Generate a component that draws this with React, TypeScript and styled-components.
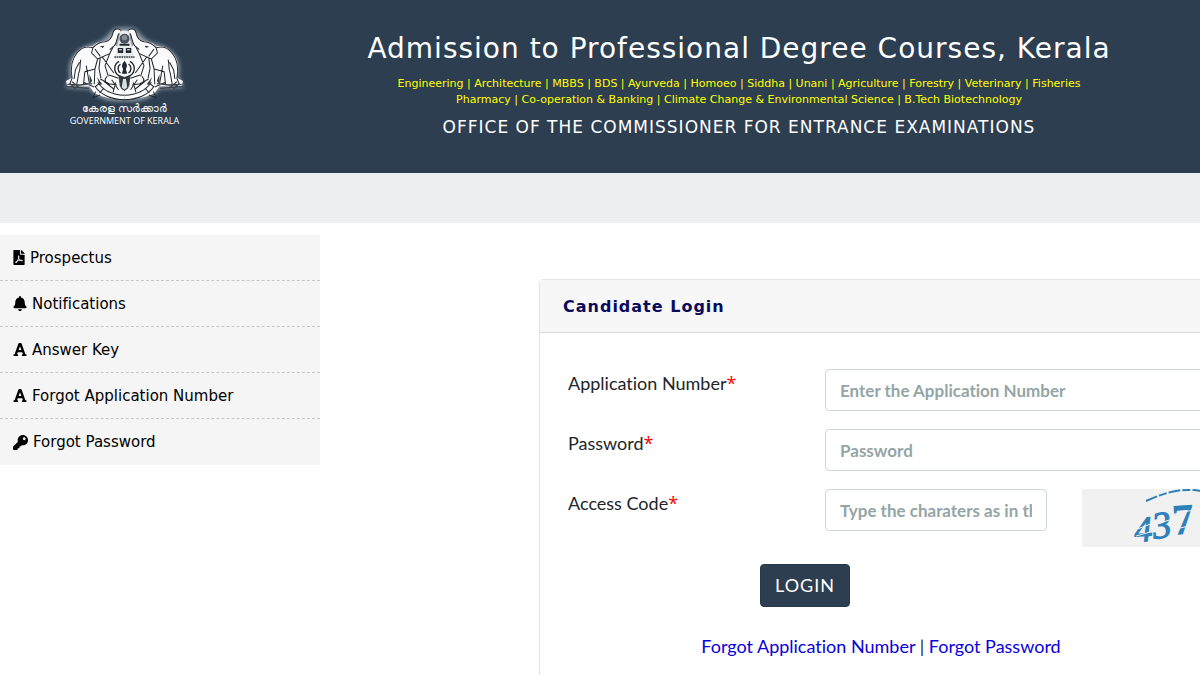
import React from "react";
import styled, { createGlobalStyle } from "styled-components";
import { FaBell, FaFilePdf, FaFont, FaKey } from "react-icons/fa";

const verdana = `Verdana, "DejaVu Sans", sans-serif`;
const lato = `Lato, "Liberation Sans", sans-serif`;

const GlobalStyle = createGlobalStyle`
  *, *::before, *::after { box-sizing: border-box; }
  body {
    margin: 0;
    background: #fff;
    color: #212529;
    font-family: ${lato};
    font-size: 18px;
    font-variant-ligatures: none;
  }
`;

const Page = styled.div`
  min-height: 100vh;
  overflow: clip;
`;

const Header = styled.header`
  display: flex;
  align-items: flex-start;
  padding: 27px 0 34px 64px;
  background: #2c3e50;
  color: #fff;
`;

const Logo = styled.div`
  flex: none;
  width: 121px;
  text-align: center;
  font-family: "Open Sans", "Noto Sans", sans-serif;
`;

const LogoCaption = styled.div<{ $size: number }>`
  font-size: ${(p) => p.$size}px;
  font-weight: 500;
  line-height: 13px;
  white-space: nowrap;
`;

const Heading = styled.div`
  flex: 1;
  padding-left: 93px;
  text-align: center;
  font-family: ${verdana};
`;

const Title = styled.h1`
  margin: 0;
  font-size: 28px;
  line-height: 44px;
  font-weight: 400;
  letter-spacing: 1px;
`;

const Courses = styled.p`
  margin: 5px 0 0;
  color: #ff0;
  font-size: 11px;
  line-height: 16px;
`;

const Office = styled.p`
  margin: 7px 0 0;
  font-size: 17px;
  line-height: 24px;
  letter-spacing: 1px;
`;

const Strip = styled.div`
  height: 50px;
  background: #ebeff0;
`;

const Main = styled.main`
  display: flex;
  align-items: flex-start;
  padding-top: 12px;
`;

const Sidebar = styled.nav`
  flex: none;
  width: 320px;
  background: #f5f5f5;
`;

const SidebarLink = styled.a`
  display: flex;
  align-items: center;
  gap: 5px;
  height: 46px;
  padding-left: 13px;
  border-bottom: 1px dashed #c8c8c8;
  color: #000;
  font-family: ${verdana};
  font-size: 15px;
  text-decoration: none;

  &:last-child { border-bottom: 0; }
`;

const Card = styled.section`
  flex: 1;
  margin: 44px -23px 0 219px;
  min-height: 400px;
  border: 1px solid #e3e5e6;
  border-radius: 4px;
`;

const CardTitle = styled.h2`
  margin: 0;
  padding: 15px 23px 13px;
  border-bottom: 1px solid #d5d9db;
  background: #f7f7f7;
  color: #0a0a5c;
  font-family: ${verdana};
  font-size: 16px;
  line-height: 24px;
  letter-spacing: 1px;
`;

const Form = styled.form`
  display: flex;
  flex-direction: column;
  gap: 18px;
  padding: 36px 8px 0 28px;
`;

const Field = styled.div`
  display: grid;
  grid-template-columns: 257px 1fr;
  align-items: start;
`;

const Label = styled.label`
  padding-top: 2px;
  line-height: 24px;
`;

const Star = styled.span`
  color: #f00;
  font-family: "Open Sans", sans-serif;
`;

const Input = styled.input`
  width: 100%;
  height: 42px;
  padding: 0 14px;
  border: 1px solid #ced4da;
  border-radius: 4px;
  background: #fff;
  font-family: ${lato};
  font-size: 17px;
  font-weight: 700;
  font-variant-ligatures: none;

  &::placeholder { color: #95a5a6; opacity: 1; }
`;

const AccessRow = styled.div`
  display: grid;
  grid-template-columns: 222px 1fr;
  gap: 35px;
  height: 57px;
`;

const Captcha = styled.div`
  height: 58px;
  background: #f1f1f1;

  svg { display: block; overflow: visible; }
`;

const Actions = styled.div`
  padding-left: 192px;
`;

const LoginButton = styled.button`
  width: 90px;
  height: 43px;
  padding: 0 0 2px;
  border: 1px solid #24384b;
  border-radius: 4px;
  background: #2c3e50;
  color: #fff;
  font-family: ${lato};
  font-size: 18px;
  letter-spacing: 1px;
`;

const Links = styled.p`
  margin: 27px 0 0;
  line-height: 24px;
  text-align: center;
`;

const TextLink = styled.a`
  color: #0a00dc;
  text-decoration: none;
`;

function EmblemHalf() {
  return (
    <g>
      <path
        d="M222 250C190 252 158 246 132 232L118 212L52 212L48 196L66 186C58 152 64 122 86 104C98 92 114 90 128 92C136 80 152 78 164 76C180 74 186 60 188 50C190 40 204 36 211 44L208 54C200 56 202 74 194 88L206 98L222 104Z"
        fill="#fbfbfb"
      />
      <g fill="none" stroke="#20262c" strokeWidth="3" strokeLinejoin="round">
        <path d="M211 44C203 36 190 40 188 50C185 66 178 76 164 78C148 79 138 84 128 96M207 53C200 56 202 76 192 90L178 102" />
        <path d="M128 96C108 90 92 98 82 110C66 128 60 154 66 188L58 208M92 132C88 150 92 160 86 172L80 206M88 140L76 162L72 190" />
        <path d="M128 96L124 112L142 130L178 114L188 94M134 100L150 122M142 130L134 160L132 206M150 126L146 158L152 188M156 124L190 172M178 114L164 150L174 182M134 160L104 168L100 206M108 150L118 206" />
        <path d="M52 206L90 208L126 204M48 212L116 218M66 198L90 218M100 200L132 214M60 204L76 220" strokeWidth="4" stroke="#3b4249" />
        <path d="M142 200C158 224 188 238 222 239M134 212C152 240 188 252 222 252M146 204L134 214M160 218L148 232M136 228L128 246L150 238M170 182C160 192 164 202 178 206M176 178L204 188M150 190L176 204L200 208M184 192L204 222M196 200L188 230M160 196L190 220" />
        <path d="M206 137C190 145 188 168 204 179L222 188M210 145C200 152 201 166 210 172" strokeWidth="4" />
      </g>
      <path d="M148 92L162 90L158 97Z M140 184L156 206L148 208Z M204 178L222 184L222 220L208 212Z M118 176L126 196L118 204Z" fill="#343b42" />
    </g>
  );
}

function Emblem() {
  return (
    <svg width="121" height="74" viewBox="42 34 360 222" preserveAspectRatio="none" role="img" aria-label="Emblem of Kerala" style={{ display: "block", overflow: "visible" }}>
      <defs>
        <filter id="glow" x="-10%" y="-10%" width="120%" height="120%">
          <feGaussianBlur stdDeviation="6" />
        </filter>
      </defs>
      <path
        d="M222 256C170 260 140 246 118 220L46 216L60 184C50 140 70 100 124 86C180 72 176 36 204 36L240 36C268 36 264 72 320 86C374 100 394 140 384 184L398 216L326 220C304 246 274 260 222 256Z"
        fill="#b8c0c8"
        opacity=".75"
        filter="url(#glow)"
      />
      <EmblemHalf />
      <g transform="matrix(-1 0 0 1 444 0)">
        <EmblemHalf />
      </g>
      <path d="M208 52C212 42 232 42 236 52L240 78L246 100L252 130H192L198 100L204 78Z" fill="#e9ecef" />
      <circle cx="222" cy="69" r="15" fill="#4b5259" />
      <circle cx="222" cy="66" r="8" fill="#858c93" />
      <path d="M207 84H237V90H207ZM202 97H218V112H202ZM226 97H242V112H226Z" fill="#22282e" />
      <path d="M206 102H214M230 102H238" stroke="#fff" strokeWidth="3" />
      <path d="M192 124H252" stroke="#343b42" strokeWidth="5" strokeDasharray="5 2" />
      <path d="M222 136C212 147 214 154 218 160L214 174H230L226 160C230 154 232 147 222 136Z" fill="#22282e" />
      <path d="M216 188L228 188L232 216L222 224L212 216Z" fill="#d9dde0" stroke="#22282e" strokeWidth="3" />
    </svg>
  );
}

function CaptchaDrawing() {
  return (
    <svg width="118" height="58" viewBox="0 0 118 58" role="img" aria-label="Access code characters">
      <g fill="#2d80b9" stroke="#2d80b9" fontFamily="Liberation Serif, serif">
        <text transform="translate(53 53) rotate(-4)" fontSize="36" fontStyle="italic" strokeWidth="1">4</text>
        <text transform="translate(72 50) rotate(-8)" fontSize="38" fontStyle="italic" strokeWidth="1">3</text>
        <text transform="translate(91 46) rotate(-4)" fontSize="44" fontWeight="700" strokeWidth="0">7</text>
      </g>
      <path d="M50 42L74 33M70 37L90 30M88 26L116 20M98 39L116 35M54 47L72 42" stroke="#f1f1f1" strokeWidth="1" />
      <path d="M64 12Q90 0 108 1Q114 1 118 2" fill="none" stroke="#2d80b9" strokeWidth="2" strokeDasharray="12 2 8 2" />
    </svg>
  );
}

const menu = [
  { label: "Prospectus", Icon: FaFilePdf, width: 12 },
  { label: "Notifications", Icon: FaBell, width: 14 },
  { label: "Answer Key", Icon: FaFont, width: 14 },
  { label: "Forgot Application Number", Icon: FaFont, width: 14 },
  { label: "Forgot Password", Icon: FaKey, width: 15 },
];

export default function App() {
  return (
    <Page>
      <GlobalStyle />
      <Header>
        <Logo>
          <Emblem />
          <LogoCaption $size={11} lang="ml">കേരള സർക്കാർ</LogoCaption>
          <LogoCaption $size={9}>GOVERNMENT OF KERALA</LogoCaption>
        </Logo>
        <Heading>
          <Title>Admission to Professional Degree Courses, Kerala</Title>
          <Courses>
            Engineering | Architecture | MBBS | BDS | Ayurveda | Homoeo | Siddha | Unani | Agriculture | Forestry | Veterinary | Fisheries
            <br />
            Pharmacy | Co-operation &amp; Banking | Climate Change &amp; Environmental Science | B.Tech Biotechnology
          </Courses>
          <Office>OFFICE OF THE COMMISSIONER FOR ENTRANCE EXAMINATIONS</Office>
        </Heading>
      </Header>
      <Strip />
      <Main>
        <Sidebar>
          {menu.map(({ label, Icon, width }) => (
            <SidebarLink key={label} href="#">
              <Icon style={{ width, height: 15 }} />
              {label}
            </SidebarLink>
          ))}
        </Sidebar>
        <Card>
          <CardTitle>Candidate Login</CardTitle>
          <Form>
            <Field>
              <Label htmlFor="application">Application Number<Star>*</Star></Label>
              <Input id="application" type="text" placeholder="Enter the Application Number" />
            </Field>
            <Field>
              <Label htmlFor="password">Password<Star>*</Star></Label>
              <Input id="password" type="password" placeholder="Password" />
            </Field>
            <Field>
              <Label htmlFor="code">Access Code<Star>*</Star></Label>
              <AccessRow>
                <Input id="code" type="text" placeholder="Type the charaters as in the picture" />
                <Captcha><CaptchaDrawing /></Captcha>
              </AccessRow>
            </Field>
            <Actions>
              <LoginButton type="button">LOGIN</LoginButton>
            </Actions>
          </Form>
          <Links>
            <TextLink href="#">Forgot Application Number</TextLink> | <TextLink href="#">Forgot Password</TextLink>
          </Links>
        </Card>
      </Main>
    </Page>
  );
}
